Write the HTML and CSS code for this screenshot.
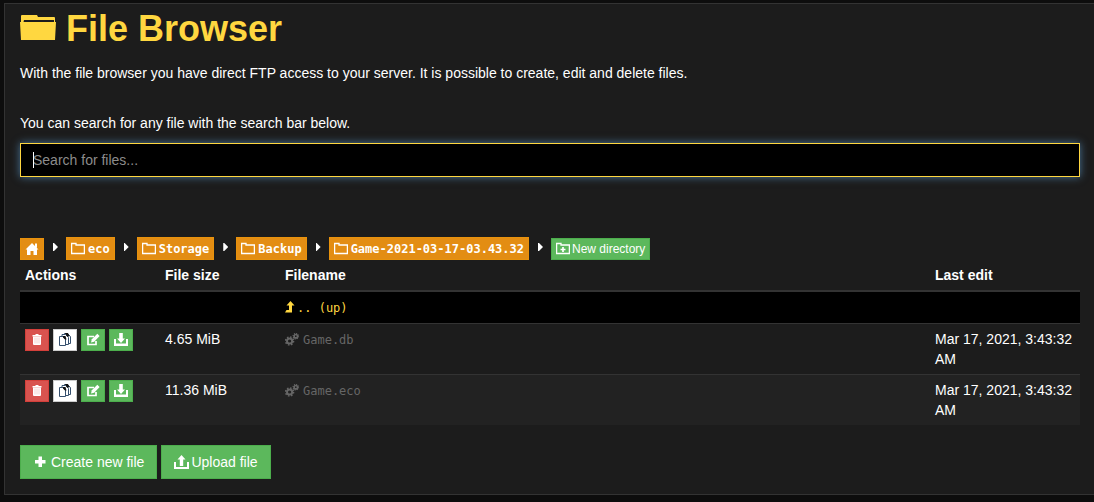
FILE: index.html
```html
<!DOCTYPE html>
<html lang="en">
<head>
<meta charset="utf-8">
<title>File Browser</title>
<link rel="stylesheet" href="styles.css">
</head>
<body>
<svg class="defs" width="0" height="0" aria-hidden="true">
  <symbol id="i-folder" viewBox="0 0 14 14"><path d="M.6 11.500V1.500h4.400v1.500h8.400v8.500z" fill="none" stroke="currentColor" stroke-width="1.300"/></symbol>
  <symbol id="i-trash" viewBox="0 0 12 12"><path fill="currentColor" d="M1.500 1h3V0h3v1h3v1.500h-9z"/><path fill="currentColor" d="M2 2.500h8V10q0 1-1 1H3q-1 0-1-1z"/><path d="M4 3.500v6M6 3.500v6M8 3.500v6" stroke="#e8a5a2" stroke-width=".5"/></symbol>
  <symbol id="i-copy" viewBox="0 0 14 14"><g fill="#fff" stroke="#36506e" stroke-width="1"><path d="M6.500.5h3l3 3v7h-6z"/><path d="M4 1.500h3.500l3 3v7H4z"/><path d="M1.500 3.500h3.500l2.500 2.500v6.500h-6z"/></g><path fill="#111" d="M7 0h3l1.500 3.500H9zM5 3h2.500l1 3.500H7L5 4.500z"/></symbol>
  <symbol id="i-edit" viewBox="0 0 14 14"><path fill="none" stroke="currentColor" stroke-width="1.700" d="M8 3.500H2v8h8V8"/><path fill="currentColor" d="M5 9.500l.8-3.200L11.300.8l2.300 2.300L8.200 8.700z"/></symbol>
  <symbol id="i-save" viewBox="0 0 14 14"><path fill="currentColor" d="M0 6h2v4.500h10V6h2v7H0zM5.200 0h3.600v5.500h2.200L7 10 3 5.500h2.200z"/></symbol>
  <symbol id="i-gears" viewBox="0 0 14 14"><g fill="none" stroke="currentColor"><circle cx="4.600" cy="8" r="2.600" stroke-width="2"/><circle cx="4.600" cy="8" r="4" stroke-width="1.500" stroke-dasharray="1.570 1.570"/><circle cx="10.800" cy="3.200" r="1.700" stroke-width="1.700"/><circle cx="10.800" cy="3.200" r="2.700" stroke-width="1.200" stroke-dasharray="1.060 1.060"/></g></symbol>
</svg>
<main class="panel">
  <h1 class="title">
    <svg class="title-icon" viewBox="0 0 36 28" aria-hidden="true"><path fill="currentColor" d="M1 6V1q0-1 1-1h15l1 2h16q1 0 1 1v4h1l-1 18H1L0 7h1z"/><path d="M4 5h30v2H3.500z" fill="#1c1c1c"/></svg>
    File Browser
  </h1>
  <p class="text intro">With the file browser you have direct FTP access to your server. It is possible to create, edit and delete files.</p>
  <label class="text" for="search">You can search for any file with the search bar below.</label>
  <div class="search">
    <input class="search-input" id="search" type="text" placeholder="Search for files...">
    <span class="caret"></span>
  </div>
  <nav class="crumbs" aria-label="Path">
    <a class="btn btn-xs warning" href="#" aria-label="Home"><svg class="ico-14" viewBox="0 0 14 14"><path fill="currentColor" d="M7 1l6.500 6.500H12V13H8.500V9h-3v4H2V7.500H.5zM10 1.500h2v4h-2z"/></svg></a>
    <span class="sep"></span>
    <a class="btn btn-xs warning code" href="#"><svg class="ico-14"><use href="#i-folder"/></svg>eco</a>
    <span class="sep"></span>
    <a class="btn btn-xs warning code" href="#"><svg class="ico-14"><use href="#i-folder"/></svg>Storage</a>
    <span class="sep"></span>
    <a class="btn btn-xs warning code" href="#"><svg class="ico-14"><use href="#i-folder"/></svg>Backup</a>
    <span class="sep"></span>
    <a class="btn btn-xs warning code" href="#"><svg class="ico-14"><use href="#i-folder"/></svg>Game-2021-03-17-03.43.32</a>
    <span class="sep"></span>
    <button class="btn btn-xs success" type="button"><svg class="ico-14"><use href="#i-folder"/><path d="M7 5v5M4.500 7.500h5" stroke="currentColor" stroke-width="1.700"/></svg>New directory</button>
  </nav>
  <table class="files">
    <colgroup><col class="col-actions"><col class="col-size"><col><col class="col-date"></colgroup>
    <thead><tr><th>Actions</th><th>File size</th><th>Filename</th><th>Last edit</th></tr></thead>
    <tbody>
      <tr class="up"><td></td><td></td><td><a class="file up-link" href="#"><svg class="ico-up" viewBox="0 0 10 14"><path fill="currentColor" d="M5.500 0L9.500 4.500H7V11.500H0l1.500-2.500H4V4.500H1.500z"/></svg>.. (up)</a></td><td></td></tr>
      <tr>
        <td><div class="actions">
          <button class="btn btn-xs icon danger" type="button" aria-label="Delete"><svg class="ico-12"><use href="#i-trash"/></svg></button>
          <button class="btn btn-xs icon plain" type="button" aria-label="Copy"><svg class="ico-14"><use href="#i-copy"/></svg></button>
          <button class="btn btn-xs icon success" type="button" aria-label="Edit"><svg class="ico-14"><use href="#i-edit"/></svg></button>
          <button class="btn btn-xs icon success" type="button" aria-label="Download"><svg class="ico-14"><use href="#i-save"/></svg></button>
        </div></td>
        <td>4.65 MiB</td>
        <td><span class="file"><svg class="ico-14"><use href="#i-gears"/></svg>Game.db</span></td>
        <td>Mar 17, 2021, 3:43:32 AM</td>
      </tr>
      <tr class="alt">
        <td><div class="actions">
          <button class="btn btn-xs icon danger" type="button" aria-label="Delete"><svg class="ico-12"><use href="#i-trash"/></svg></button>
          <button class="btn btn-xs icon plain" type="button" aria-label="Copy"><svg class="ico-14"><use href="#i-copy"/></svg></button>
          <button class="btn btn-xs icon success" type="button" aria-label="Edit"><svg class="ico-14"><use href="#i-edit"/></svg></button>
          <button class="btn btn-xs icon success" type="button" aria-label="Download"><svg class="ico-14"><use href="#i-save"/></svg></button>
        </div></td>
        <td>11.36 MiB</td>
        <td><span class="file"><svg class="ico-14"><use href="#i-gears"/></svg>Game.eco</span></td>
        <td>Mar 17, 2021, 3:43:32 AM</td>
      </tr>
    </tbody>
  </table>
  <div class="footer">
    <button class="btn btn-md success" type="button"><svg class="ico-14" viewBox="0 0 14 14"><path fill="currentColor" d="M5.500 1.500h3.500v3.500h3.500v3.500h-3.500v3.500H5.500V8.500H2V5h3.500z"/></svg>Create new file</button>
    <button class="btn btn-md upload success" type="button"><svg class="ico-15" viewBox="0 0 15 15"><path fill="currentColor" d="M0 7h2v5h11V7h2v7H0zM7.500 0l4 4.500H9.200V11H5.800V4.500H3.500z"/></svg>Upload file</button>
  </div>
</main>
</body>
</html>
```
FILE: styles.css
```css
* { box-sizing: border-box; }
body {
  margin: 0;
  padding: 3px 0 7px 4px;
  overflow-x: hidden;
  background: #0d0d0d;
  color: #fff;
  font: 14px/20px "Liberation Sans", Arial, sans-serif;
}
.defs { position: absolute; }
.panel {
  margin-right: -2px;
  padding: 5px 15px 15px;
  background: #1c1c1c;
  border: 1px solid #333;
}
.title {
  display: flex;
  align-items: center;
  gap: 10px;
  margin: 0 0 14px;
  color: #ffd740;
  font-size: 36px;
  line-height: 40px;
}
.title-icon { width: 36px; height: 28px; }
.text { display: block; margin: 0 0 10px; }
.intro { margin-bottom: 30px; }
.search { position: relative; margin-bottom: 60px; }
.search-input {
  display: block;
  width: 100%;
  height: 34px;
  padding: 6px 12px;
  background: #000;
  border: 1px solid #ffd740;
  border-radius: 0;
  outline: 0;
  color: #fff;
  font: inherit;
  box-shadow: 0 0 8px rgba(102, 175, 233, .6);
}
.search-input::placeholder { color: #8c8c8c; opacity: 1; }
.caret {
  position: absolute;
  left: 13px;
  top: 9px;
  width: 1px;
  height: 16px;
  background: #fff;
}
.crumbs { display: flex; align-items: flex-end; }
.sep {
  flex: 0 0 22px;
  display: flex;
  height: 23px;
  padding: 6px 0 0 9px;
}
.sep::before {
  content: "";
  width: 5px;
  height: 8px;
  background: #fff;
  clip-path: polygon(0 0, 20% 0, 100% 50%, 20% 100%, 0 100%);
}
.btn {
  display: inline-flex;
  align-items: center;
  justify-content: center;
  margin: 0;
  border: 1px solid;
  border-radius: 0;
  color: #fff;
  text-decoration: none;
  white-space: nowrap;
  font-family: inherit;
}
.btn-xs { gap: 2px; min-width: 24px; height: 22px; padding: 0 4px; font-size: 12px; line-height: 18px; }
.btn-md { gap: 4px; height: 34px; padding: 0 12px; font-size: 14px; line-height: 20px; }
.btn-md.upload { gap: 2px; }
.code {
  gap: 3px;
  height: 23px;
  font-family: "DejaVu Sans Mono", monospace;
  font-weight: bold;
}
.warning { background: #e38d13; border-color: #e8920c; }
.success { background: #5cb85c; border-color: #4cae4c; }
.danger { background: #d9534f; border-color: #d43f3a; }
.plain { background: #fff; border-color: #ccc; }
.btn.icon { padding: 0; }
.ico-12, .ico-14, .ico-15, .ico-up { flex: none; }
.ico-12 { width: 12px; height: 12px; }
.ico-14 { width: 14px; height: 14px; }
.ico-15 { width: 15px; height: 15px; }
.ico-up { width: 10px; height: 14px; }
.files {
  width: 100%;
  margin-bottom: 20px;
  table-layout: fixed;
  border-spacing: 0;
}
.col-actions { width: 140px; }
.col-size { width: 120px; }
.col-date { width: 150px; }
.files th, .files td { padding: 5px; text-align: left; vertical-align: top; }
.files th { border-bottom: 2px solid #333; }
.files td { border-top: 1px solid #333; }
.files .up td { height: 31px; background: #000; border-top-color: #000; }
.alt { background: #222; }
.actions { display: flex; gap: 4px; }
.file {
  display: flex;
  align-items: center;
  gap: 4px;
  color: #666;
  font: 12px/22px "DejaVu Sans Mono", monospace;
}
.up-link { gap: 2px; color: #ffd740; line-height: 20px; text-decoration: none; }
.footer { display: flex; gap: 4px; }
```
